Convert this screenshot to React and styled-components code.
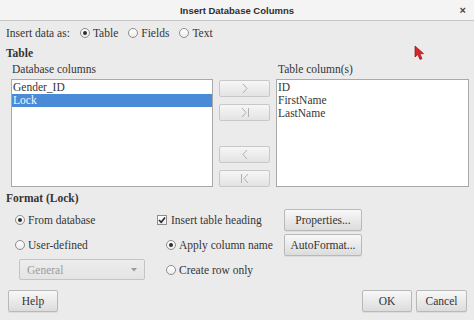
import React from "react";
import styled, { createGlobalStyle } from "styled-components";

const Global = createGlobalStyle`
  html, body { margin: 0; padding: 0; background: #ebebeb; }
  body {
    font-family: "Liberation Serif", "Times New Roman", serif;
    font-size: 11.5px;
    color: #353535;
  }
  * { box-sizing: border-box; }
`;

const Window = styled.div`
  width: 474px;
  height: 320px;
  background: #ebebeb;
  position: relative;
  overflow: hidden;
  display: flex;
  flex-direction: column;
`;

const TitleBar = styled.div`
  height: 21px;
  flex: none;
  border-bottom: 1px solid #c6c6c6;
  background: #f4f4f4;
  display: grid;
  grid-template-columns: 1fr auto 1fr;
  align-items: center;
  font-family: "Liberation Sans", Arial, sans-serif;
  font-weight: bold;
  font-size: 9.5px;
  color: #2e2e2e;
`;

const Title = styled.div`
  grid-column: 2;
`;

const Close = styled.div`
  grid-column: 3;
  justify-self: end;
  padding-right: 8px;
  font-size: 11px;
  color: #444;
`;

const Body = styled.div`
  padding: 0 5px 0 6px;
  display: flex;
  flex-direction: column;
`;

const InsertRow = styled.div`
  height: 24px;
  display: flex;
  align-items: center;
  gap: 10px;
`;

const Option = styled.label`
  display: inline-flex;
  align-items: center;
  gap: ${(p) => p.$gap ?? 3}px;
  white-space: nowrap;
  padding-left: ${(p) => p.$indent ?? 0}px;
`;

const RadioDot = styled.span`
  width: 10px;
  height: 10px;
  border-radius: 50%;
  border: 1px solid #8e8e8e;
  background: linear-gradient(#ffffff, #ececec);
  display: inline-flex;
  align-items: center;
  justify-content: center;
  flex: none;
  &::after {
    content: "";
    width: 4px;
    height: 4px;
    border-radius: 50%;
    background: ${(p) => (p.$on ? "#2f2f2f" : "transparent")};
  }
`;

const CheckBox = styled.span`
  width: 10px;
  height: 10px;
  border: 1px solid #8e8e8e;
  background: linear-gradient(#ffffff, #ececec);
  display: inline-flex;
  align-items: center;
  justify-content: center;
  flex: none;
`;

const Heading = styled.div`
  font-weight: bold;
  height: ${(p) => p.$h ?? 16}px;
  line-height: ${(p) => p.$h ?? 16}px;
  margin-top: ${(p) => p.$mt ?? 0}px;
`;

const ColumnsArea = styled.div`
  padding-left: 5px;
  display: grid;
  grid-template-columns: 202px 51px 193px;
  grid-template-rows: 17px 108px;
  column-gap: 6px;
  row-gap: 1px;
`;

const ColLabel = styled.div`
  line-height: 17px;
  padding-left: ${(p) => p.$pl ?? 1}px;
  grid-column: ${(p) => p.$col};
`;

const ListBox = styled.div`
  background: #ffffff;
  border: 1px solid #a9a9a9;
  padding-top: 1px;
  display: flex;
  flex-direction: column;
`;

const ListItem = styled.div`
  height: 13px;
  line-height: 13px;
  padding-left: 1px;
  background: ${(p) => (p.$sel ? "#4a8bd8" : "transparent")};
  color: ${(p) => (p.$sel ? "#f4f8ff" : "#353535")};
`;

const MoveColumn = styled.div`
  display: flex;
  flex-direction: column;
  justify-content: space-between;
  padding-top: 1px;
`;

const MoveGroup = styled.div`
  display: flex;
  flex-direction: column;
  gap: 7px;
`;

const ArrowButton = styled.button`
  height: 17px;
  padding: 0;
  border: 1px solid #c8c8c8;
  border-radius: 2px;
  background: linear-gradient(#f6f6f6, #e3e3e3);
  display: flex;
  align-items: center;
  justify-content: center;
`;

const FormatGrid = styled.div`
  padding-left: 9px;
  display: grid;
  grid-template-columns: 142px 127px 78px;
  grid-auto-rows: 25px;
  align-items: center;
`;

const PushButton = styled.button`
  height: 22px;
  width: ${(p) => p.$w ?? 50}px;
  padding: 0;
  border: 1px solid #b9b9b9;
  border-radius: 2px;
  background: linear-gradient(#f8f8f8, #dcdcdc);
  box-shadow: 0 1px 0 rgba(0, 0, 0, 0.06);
  font-family: "Liberation Serif", "Times New Roman", serif;
  font-size: 11.5px;
  color: #333;
`;

const Dropdown = styled.div`
  margin-left: 4px;
  width: 126px;
  height: 21px;
  border: 1px solid #c4c4c4;
  border-radius: 2px;
  background: linear-gradient(#ededed, #e4e4e4);
  color: #9c9c9c;
  display: flex;
  align-items: center;
  justify-content: space-between;
  padding: 0 7px 0 7px;
`;

const Footer = styled.div`
  margin-top: 8px;
  padding: 0 2px 0 2px;
  display: flex;
  justify-content: space-between;
`;

const FooterRight = styled.div`
  display: flex;
  gap: 4px;
`;

const Cursor = styled.svg`
  position: absolute;
  left: 414px;
  top: 45px;
`;

const Chevron = ({ dir = "right", bar }) => (
  <svg width="10" height="11" viewBox="0 0 10 11">
    <g fill="none" stroke="#a8a8a8" strokeWidth="0.9">
      {dir === "right" ? (
        <polyline points={bar ? "2,1 6,5.5 2,10" : "3,1 7,5.5 3,10"} />
      ) : (
        <polyline points={bar ? "8,1 4,5.5 8,10" : "7,1 3,5.5 7,10"} />
      )}
      {bar && dir === "right" && <line x1="8.5" y1="1" x2="8.5" y2="10" />}
      {bar && dir === "left" && <line x1="1.5" y1="1" x2="1.5" y2="10" />}
    </g>
  </svg>
);

const Radio = ({ on, children, indent }) => (
  <Option $indent={indent}>
    <RadioDot $on={on} />
    {children}
  </Option>
);

export default function App() {
  return (
    <>
      <Global />
      <Window>
        <TitleBar>
          <Title>Insert Database Columns</Title>
          <Close>×</Close>
        </TitleBar>
        <Body>
          <InsertRow>
            <span>Insert data as:</span>
            <Radio on>Table</Radio>
            <Radio>Fields</Radio>
            <Radio>Text</Radio>
          </InsertRow>
          <Heading>Table</Heading>
          <ColumnsArea>
            <ColLabel $col={1}>Database columns</ColLabel>
            <ColLabel $col={3} $pl={2}>Table column(s)</ColLabel>
            <ListBox>
              <ListItem>Gender_ID</ListItem>
              <ListItem $sel>Lock</ListItem>
            </ListBox>
            <MoveColumn>
              <MoveGroup>
                <ArrowButton><Chevron dir="right" /></ArrowButton>
                <ArrowButton><Chevron dir="right" bar /></ArrowButton>
              </MoveGroup>
              <MoveGroup>
                <ArrowButton><Chevron dir="left" /></ArrowButton>
                <ArrowButton><Chevron dir="left" bar /></ArrowButton>
              </MoveGroup>
            </MoveColumn>
            <ListBox>
              <ListItem>ID</ListItem>
              <ListItem>FirstName</ListItem>
              <ListItem>LastName</ListItem>
            </ListBox>
          </ColumnsArea>
          <Heading $h={17} $mt={3}>Format (Lock)</Heading>
          <FormatGrid>
            <Radio on>From database</Radio>
            <Option $gap={4}>
              <CheckBox>
                <svg width="8" height="8" viewBox="0 0 8 8">
                  <polyline points="1,4 3.2,6.3 7,1.5" fill="none" stroke="#2a2a2a" strokeWidth="1.6" />
                </svg>
              </CheckBox>
              Insert table heading
            </Option>
            <PushButton $w={78}>Properties...</PushButton>
            <Radio>User-defined</Radio>
            <Radio on indent={9}>Apply column name</Radio>
            <PushButton $w={78}>AutoFormat...</PushButton>
            <Dropdown>
              <span>General</span>
              <svg width="6" height="4" viewBox="0 0 6 4">
                <polygon points="0,0 6,0 3,3.5" fill="#9a9a9a" />
              </svg>
            </Dropdown>
            <Radio indent={9}>Create row only</Radio>
          </FormatGrid>
          <Footer>
            <PushButton $w={50}>Help</PushButton>
            <FooterRight>
              <PushButton $w={50}>OK</PushButton>
              <PushButton $w={51}>Cancel</PushButton>
            </FooterRight>
          </Footer>
        </Body>
        <Cursor width="11" height="16" viewBox="0 0 11 16">
          <polygon
            points="1,1 1,12 3.8,9.6 6,14.5 8,13.6 5.9,8.8 9.5,8.6"
            fill="#d8262b"
            stroke="#8c1216"
            strokeWidth="0.7"
          />
        </Cursor>
      </Window>
    </>
  );
}
